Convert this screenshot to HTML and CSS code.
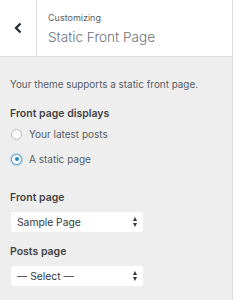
FILE: index.html
```html
<!DOCTYPE html>
<html>
<head>
    <title>Customizing Static Front Page</title>
    <link rel="stylesheet" href="styles.css">
</head>
<body>
    <div class="panel">
        <div class="head">
            <div class="back">
                <svg width="10" height="12" viewBox="0 0 10 12"><path d="M7.5 1.5 L3 6 L7.5 10.5" fill="none" stroke="#23282d" stroke-width="2.2"/></svg>
            </div>
            <div class="title">
                <div class="small">Customizing</div>
                <div class="big">Static Front Page</div>
            </div>
        </div>
        <div class="content">
            <p class="desc">Your theme supports a static front page.</p>
            <div class="label">Front page displays</div>
            <div class="radio"><span class="dot"></span>Your latest posts</div>
            <div class="radio on"><span class="dot"></span>A static page</div>
            <div class="label second">Front page</div>
            <div class="select">Sample Page<span class="arrows"><i class="up"></i><i class="down"></i></span></div>
            <div class="label third">Posts page</div>
            <div class="select">&mdash; Select &mdash;<span class="arrows"><i class="up"></i><i class="down"></i></span></div>
        </div>
    </div>
</body>
</html>
```
FILE: styles.css
```css
*{
    padding: 0;
    margin: 0;
}
body{
    font-family: Inter, "Liberation Sans", sans-serif;
    background: #eeeeee;
    color: #555d66;
}
.panel{
    width: 232px;
    height: 300px;
    border-right: 1px solid #dddddd;
    background: #eeeeee;
}
.head{
    display: flex;
    height: 56px;
    background: #ffffff;
    border-bottom: 1px solid #dddddd;
}
.back{
    width: 36px;
    border-right: 1px solid #dddddd;
    display: flex;
    align-items: center;
    justify-content: center;
}
.title{
    padding: 12px 0 0 11px;
}
.small{
    font-size: 9px;
    color: #555d66;
    line-height: 11px;
}
.big{
    font-size: 13.6px;
    font-weight: 300;
    color: #6b7177;
    line-height: 20px;
    margin-top: 4px;
}
.content{
    padding: 21px 10px 0 10px;
}
.desc{
    font-size: 9.9px;
    line-height: 12px;
}
.label{
    font-size: 10.5px;
    font-weight: 600;
    color: #444;
    line-height: 14px;
    margin-top: 17px;
}
.radio{
    display: flex;
    align-items: center;
    font-size: 10px;
    line-height: 14px;
    margin-top: 6px;
    height: 14px;
}
.radio + .radio{
    margin-top: 11px;
}
.dot{
    width: 11px;
    height: 11px;
    border: 1px solid #b4b9be;
    border-radius: 50%;
    background: #fff;
    margin: 0 7px 0 1px;
    box-sizing: border-box;
    display: flex;
    align-items: center;
    justify-content: center;
}
.on .dot{
    border-color: #5b9dd9;
    box-shadow: 0 0 2px rgba(30,140,190,.8);
}
.on .dot::after{
    content: "";
    width: 4px;
    height: 4px;
    border-radius: 50%;
    background: #1e8cbe;
}
.label.second{
    margin-top: 25px;
}
.label.third{
    margin-top: 13px;
}
.select{
    position: relative;
    width: 132px;
    height: 20px;
    margin: 7px 0 0 1px;
    background: #fff;
    border-radius: 3px;
    font-size: 10.3px;
    line-height: 20px;
    padding-left: 6px;
    box-sizing: border-box;
    color: #32373c;
}
.arrows{
    position: absolute;
    right: 5px;
    top: 5px;
    width: 5px;
}
.arrows i{
    display: block;
    width: 0;
    height: 0;
    border-left: 2.5px solid transparent;
    border-right: 2.5px solid transparent;
}
.arrows .up{
    border-bottom: 4px solid #32373c;
}
.arrows .down{
    border-top: 4px solid #32373c;
    margin-top: 2px;
}
```
